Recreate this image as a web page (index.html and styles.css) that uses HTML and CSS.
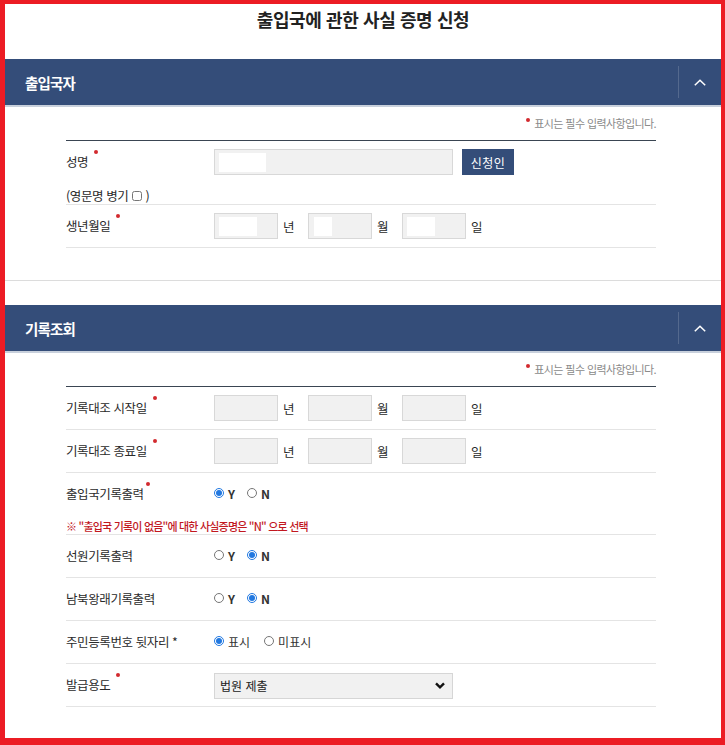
FILE: index.html
```html
<!DOCTYPE html>
<html lang="ko">
<head>
<meta charset="utf-8">
<title>출입국에 관한 사실 증명 신청</title>
<link rel="stylesheet" href="styles.css">
</head>
<body>
<div class="page">
  <h1 class="title">출입국에 관한 사실 증명 신청</h1>

  <section class="panel panel-first">
    <div class="panel-head">
      <h2>출입국자</h2>
      <span class="head-sep"></span>
      <button class="toggle" type="button" aria-label="접기">
        <svg width="12" height="7" viewBox="0 0 12 7"><polyline points="0.8,6.3 6,1.2 11.2,6.3" fill="none" stroke="#fff" stroke-width="1.5"/></svg>
      </button>
    </div>
    <div class="panel-body">
      <p class="req-note"><span class="dot dot-note"></span>표시는 필수 입력사항입니다.</p>
      <div class="form">
        <div class="row row-sub">
          <div class="row-main">
            <div class="label">성명<span class="dot"></span></div>
            <div class="field">
              <div class="input input-name"><span class="mask mask-name"></span></div>
              <button class="btn" type="button">신청인</button>
            </div>
          </div>
          <div class="sub">(영문명 병기 <input class="chk" type="checkbox"> )</div>
        </div>
        <div class="row">
          <div class="row-main">
            <div class="label">생년월일<span class="dot"></span></div>
            <div class="field">
              <div class="input input-date"><span class="mask mask-y"></span></div><span class="unit">년</span>
              <div class="input input-date"><span class="mask mask-m"></span></div><span class="unit">월</span>
              <div class="input input-date"><span class="mask mask-d"></span></div><span class="unit">일</span>
            </div>
          </div>
        </div>
      </div>
    </div>
  </section>

  <section class="panel panel-second">
    <div class="panel-head">
      <h2>기록조회</h2>
      <span class="head-sep"></span>
      <button class="toggle" type="button" aria-label="접기">
        <svg width="12" height="7" viewBox="0 0 12 7"><polyline points="0.8,6.3 6,1.2 11.2,6.3" fill="none" stroke="#fff" stroke-width="1.5"/></svg>
      </button>
    </div>
    <div class="panel-body">
      <p class="req-note"><span class="dot dot-note"></span>표시는 필수 입력사항입니다.</p>
      <div class="form">
        <div class="row">
          <div class="row-main">
            <div class="label">기록대조 시작일<span class="dot"></span></div>
            <div class="field">
              <div class="input input-date"></div><span class="unit">년</span>
              <div class="input input-date"></div><span class="unit">월</span>
              <div class="input input-date"></div><span class="unit">일</span>
            </div>
          </div>
        </div>
        <div class="row">
          <div class="row-main">
            <div class="label">기록대조 종료일<span class="dot"></span></div>
            <div class="field">
              <div class="input input-date"></div><span class="unit">년</span>
              <div class="input input-date"></div><span class="unit">월</span>
              <div class="input input-date"></div><span class="unit">일</span>
            </div>
          </div>
        </div>
        <div class="row row-note">
          <div class="row-main">
            <div class="label">출입국기록출력<span class="dot dot-tight"></span></div>
            <div class="field field-radio">
              <label class="opt opt-bold"><input type="radio" name="r1" checked>Y</label>
              <label class="opt opt-bold"><input type="radio" name="r1">N</label>
            </div>
          </div>
          <p class="warn">※ "출입국 기록이 없음"에 대한 사실증명은 "N" 으로 선택</p>
        </div>
        <div class="row">
          <div class="row-main">
            <div class="label">선원기록출력</div>
            <div class="field field-radio">
              <label class="opt opt-bold"><input type="radio" name="r2">Y</label>
              <label class="opt opt-bold"><input type="radio" name="r2" checked>N</label>
            </div>
          </div>
        </div>
        <div class="row">
          <div class="row-main">
            <div class="label">남북왕래기록출력</div>
            <div class="field field-radio">
              <label class="opt opt-bold"><input type="radio" name="r3">Y</label>
              <label class="opt opt-bold"><input type="radio" name="r3" checked>N</label>
            </div>
          </div>
        </div>
        <div class="row">
          <div class="row-main">
            <div class="label">주민등록번호 뒷자리 *</div>
            <div class="field field-radio">
              <label class="opt opt-wide"><input type="radio" name="r4" checked>표시</label>
              <label class="opt"><input type="radio" name="r4">미표시</label>
            </div>
          </div>
        </div>
        <div class="row">
          <div class="row-main">
            <div class="label">발급용도<span class="dot"></span></div>
            <div class="field">
              <div class="select-wrap">
                <select class="select">
                  <option>법원 제출</option>
                </select>
                <svg class="select-arrow" width="10" height="7" viewBox="0 0 10 7"><polyline points="1,1.3 5,5.3 9,1.3" fill="none" stroke="#111" stroke-width="2.4"/></svg>
              </div>
            </div>
          </div>
        </div>
      </div>
    </div>
  </section>
</div>
</body>
</html>
```

FILE: styles.css
```css
* { box-sizing: border-box; }

html, body {
  margin: 0;
  padding: 0;
  background: #fff;
}

body {
  font-family: "Noto Sans CJK KR", "Noto Sans", "Liberation Sans", sans-serif;
  color: #333;
}

.page {
  width: 725px;
  height: 745px;
  overflow: hidden;
  border-style: solid;
  border-color: #ec1c24;
  border-width: 4px 4px 7px 5px;
  background: #fff;
}

.title {
  margin: 0 0 25px;
  height: 30px;
  line-height: 30px;
  font-size: 18px;
  font-weight: 700;
  color: #222;
  text-align: center;
  letter-spacing: -0.4px;
}

.panel-first {
  border-bottom: 1px solid #dcdcdc;
}

.panel-second {
  margin-top: 24px;
}

.panel-head {
  display: flex;
  align-items: center;
  height: 48px;
  background: #344d79;
  border-bottom: 2px solid #c8d0dc;
}

.panel-head h2 {
  flex: 1;
  margin: 0;
  padding-left: 20px;
  font-size: 14.5px;
  font-weight: 700;
  color: #fff;
  letter-spacing: -0.8px;
}

.head-sep {
  width: 1px;
  height: 32px;
  background: rgba(255, 255, 255, 0.16);
}

.toggle {
  width: 42px;
  height: 46px;
  padding: 0;
  border: 0;
  background: transparent;
  display: flex;
  align-items: center;
  justify-content: center;
}

.toggle svg { display: block; }

.panel-body {
  padding: 8px 65px 0 61px;
}

.panel-first .panel-body {
  padding-bottom: 32px;
}

.req-note {
  margin: 0 0 9px;
  line-height: 16px;
  font-size: 11px;
  color: #8a8a8a;
  text-align: right;
  letter-spacing: -0.6px;
}

.dot {
  display: inline-block;
  width: 4px;
  height: 4px;
  border-radius: 50%;
  background: #d22a2f;
  margin-left: 6px;
  vertical-align: middle;
  position: relative;
  top: -12px;
}

.dot-tight { margin-left: 2px; }

.dot-note {
  margin-left: 0;
  margin-right: 4px;
  top: -5px;
}

.form {
  border-top: 1px solid #3a4552;
}

.row {
  border-bottom: 1px solid #e4e4e4;
  padding: 8px 0;
}

.row-sub,
.row-note {
  padding-bottom: 0;
}

.row-main {
  display: flex;
  align-items: center;
  min-height: 26px;
}

.label {
  flex: none;
  width: 148px;
  font-size: 12.5px;
  color: #2a2a2a;
  letter-spacing: -0.4px;
  line-height: 26px;
}

.field {
  display: flex;
  align-items: center;
}

.input {
  display: flex;
  align-items: stretch;
  height: 26px;
  padding: 3px 3px 2px 4px;
  background: #f1f1f1;
  border: 1px solid #d8d8d8;
}

.input-name { width: 239px; }
.input-date { width: 64px; }

.mask {
  display: block;
  background: #fff;
}

.mask-name { width: 47px; }
.mask-y { width: 38px; }
.mask-m { width: 18px; margin-left: 1px; }
.mask-d { width: 28px; }

.unit {
  width: 30px;
  padding-left: 5px;
  font-size: 12.5px;
  color: #2a2a2a;
}

.btn {
  width: 52px;
  height: 26px;
  margin-left: 9px;
  padding: 0;
  border: 0;
  background: #344d79;
  color: #fff;
  font-family: inherit;
  font-size: 12px;
  letter-spacing: 0.5px;
}

.sub {
  margin-top: 13px;
  line-height: 16px;
  font-size: 12.5px;
  color: #2a2a2a;
  letter-spacing: -0.4px;
  display: flex;
  align-items: center;
}

.chk {
  width: 10px;
  height: 10px;
  margin: 0 3px 0 4px;
}

.field-radio {
  margin-top: -2px;
}

.opt {
  display: inline-flex;
  align-items: center;
  margin-right: 12px;
  font-size: 12px;
  color: #333;
}

.opt-bold { font-weight: 700; }
.opt-wide { margin-right: 14px; }

.opt input {
  width: 10px;
  height: 10px;
  margin: 0 4px 0 0;
  accent-color: #2178e0;
}

.warn {
  margin: 11px 0 0;
  line-height: 16px;
  font-size: 11px;
  font-weight: 500;
  color: #c2181f;
  letter-spacing: -0.8px;
}

.select-wrap {
  position: relative;
  width: 239px;
  height: 26px;
}

.select {
  appearance: none;
  -webkit-appearance: none;
  width: 239px;
  height: 26px;
  padding: 0 0 0 5px;
  border: 1px solid #d6d6d6;
  border-radius: 0;
  background: #f1f1f1;
  font-family: inherit;
  font-size: 12px;
  color: #222;
}

.select-arrow {
  position: absolute;
  right: 8px;
  top: 10px;
}
```
